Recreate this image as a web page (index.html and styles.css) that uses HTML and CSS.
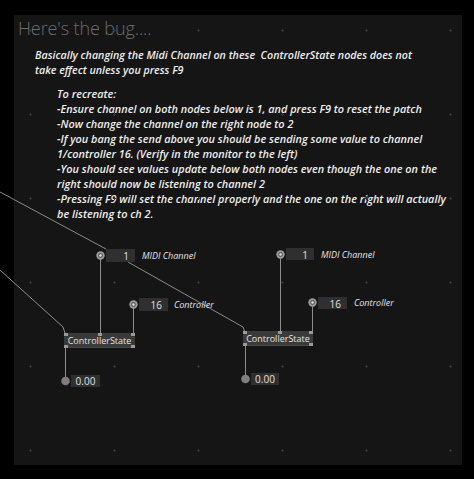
FILE: index.html
```html
<!DOCTYPE html>
<html>
<head>
<meta charset="utf-8">
<link rel="stylesheet" href="styles.css">
</head>
<body>
<div class="panel">
  <h1 class="title">Here's the bug....</h1>
  <p class="intro">Basically changing the Midi Channel on these&nbsp; ControllerState nodes does not take effect unless you press F9</p>
  <div class="steps">
    <p>To recreate:</p>
    <p>-Ensure channel on both nodes below is 1, and press F9 to reset the patch</p>
    <p>-Now change the channel on the right node to 2</p>
    <p>-If you bang the send above you should be sending some value to channel 1/controller 16. (Verify in the monitor to the left)</p>
    <p>-You should see values update below both nodes even though the one on the right should now be listening to channel 2</p>
    <p>-Pressing F9 will set the channel properly and the one on the right will actually be listening to ch 2.</p>
  </div>
</div>

<svg class="wires" width="474" height="479" viewBox="0 0 474 479">
  <defs>
    <pattern id="grid" x="0" y="0" width="84" height="84" patternUnits="userSpaceOnUse">
      <path d="M29 30.5h3M30.5 29v3" stroke="#333333" stroke-width="1"/>
    </pattern>
  </defs>
  <rect x="14" y="15" width="448" height="450" fill="url(#grid)"/>
  <g stroke="#8c8c8c" stroke-width="1" fill="none">
    <polyline points="0,192 106,249"/>
    <polyline points="0,270 63,327 65,333"/>
    <polyline points="128,262 243,327 244.5,331"/>
    <line x1="100.5" y1="258" x2="100.5" y2="333"/>
    <line x1="133.5" y1="307" x2="133.5" y2="333"/>
    <line x1="65.5" y1="348" x2="65.5" y2="378"/>
    <line x1="280.5" y1="257" x2="280.5" y2="331"/>
    <line x1="312.5" y1="305" x2="312.5" y2="331"/>
    <line x1="245.5" y1="346" x2="245.5" y2="376"/>
  </g>
  <g class="pin">
    <circle cx="100.5" cy="255.5" r="4.2" fill="#9c9c9c"/>
    <circle cx="100.5" cy="255.5" r="2.4" fill="#5a5a5a"/>
    <circle cx="100.5" cy="255.5" r="1.2" fill="#e6e6e6"/>
    <circle cx="133.5" cy="304.5" r="4.2" fill="#9c9c9c"/>
    <circle cx="133.5" cy="304.5" r="2.4" fill="#5a5a5a"/>
    <circle cx="133.5" cy="304.5" r="1.2" fill="#e6e6e6"/>
    <circle cx="280.5" cy="254.5" r="4.2" fill="#9c9c9c"/>
    <circle cx="280.5" cy="254.5" r="2.4" fill="#5a5a5a"/>
    <circle cx="280.5" cy="254.5" r="1.2" fill="#e6e6e6"/>
    <circle cx="312.5" cy="302.5" r="4.2" fill="#9c9c9c"/>
    <circle cx="312.5" cy="302.5" r="2.4" fill="#5a5a5a"/>
    <circle cx="312.5" cy="302.5" r="1.2" fill="#e6e6e6"/>
    <circle cx="65.5" cy="381" r="4.3" fill="#7e7e7e"/>
    <circle cx="245.5" cy="379" r="4.3" fill="#7e7e7e"/>
  </g>
</svg>

<div class="box num" style="left:106px;top:249px;width:29px;height:13px">1</div>
<div class="label" style="left:142px;top:249px">MIDI Channel</div>
<div class="box num" style="left:139px;top:298px;width:29px;height:13px">16</div>
<div class="label" style="left:174px;top:298px">Controller</div>
<div class="node" style="left:64px;top:333px;width:71px">
  <span class="port tl"></span><span class="port tm" style="left:34px"></span><span class="port tr"></span>
  ControllerState
  <span class="port bl"></span><span class="port br"></span>
</div>
<div class="box out" style="left:71px;top:375px;width:29px;height:12px">0.00</div>

<div class="box num" style="left:286px;top:248px;width:28px;height:12px">1</div>
<div class="label" style="left:321px;top:248px">MIDI Channel</div>
<div class="box num" style="left:318px;top:297px;width:29px;height:12px">16</div>
<div class="label" style="left:354px;top:296px">Controller</div>
<div class="node" style="left:243px;top:331px;width:70px">
  <span class="port tl"></span><span class="port tm" style="left:35px"></span><span class="port tr"></span>
  ControllerState
  <span class="port bl"></span><span class="port br"></span>
</div>
<div class="box out" style="left:251px;top:373px;width:28px;height:12px">0.00</div>
</body>
</html>
```
FILE: styles.css
```css
html, body {
  margin: 0;
  padding: 0;
  background: #000;
}
body {
  width: 474px;
  height: 479px;
  overflow: hidden;
  position: relative;
  padding-top: 15px;
  box-sizing: border-box;
  font-family: "Open Sans", "Liberation Sans", sans-serif;
}
.panel {
  margin-left: 14px;
  width: 448px;
  height: 450px;
  background: #151515;
  box-sizing: border-box;
  padding-top: 1px;
}
.title {
  margin: 0 0 0 4px;
  font-size: 18px;
  line-height: 25px;
  font-weight: 300;
  color: #6c6c6c;
  letter-spacing: -0.1px;
}
.intro {
  margin: 7px 0 0 21px;
  width: 392px;
  font-size: 10.7px;
  line-height: 15px;
  font-style: italic;
  font-weight: 600;
  color: #eeeeee;
}
.steps {
  margin: 8px 0 0 43px;
  width: 393px;
  font-size: 10.9px;
  line-height: 15px;
  font-style: italic;
  font-weight: 600;
  color: #eeeeee;
}
.steps p {
  margin: 0;
}
.wires {
  position: absolute;
  left: 0;
  top: 0;
}
.box {
  position: absolute;
  background: #2f2f2f;
  color: #e0e0e0;
  font-size: 10px;
  line-height: 12px;
  box-sizing: border-box;
}
.num {
  text-align: right;
  padding-right: 6px;
  padding-top: 1px;
}
.out {
  text-align: center;
}
.label {
  position: absolute;
  font-size: 9px;
  line-height: 13px;
  font-style: italic;
  color: #e6e6e6;
}
.node {
  position: absolute;
  height: 15px;
  background: #3a3a3a;
  color: #e4e4e4;
  font-size: 9px;
  line-height: 15px;
  text-align: center;
  border-bottom: 1px solid #4a4a4a;
  box-sizing: border-box;
}
.port {
  position: absolute;
  width: 4px;
  height: 3px;
  background: #9a9a9a;
}
.tl { left: 0; top: 0; }
.tr { right: 0; top: 0; }
.tm { top: 0; }
.bl { left: 0; bottom: -1px; }
.br { right: 0; bottom: -1px; }
```
